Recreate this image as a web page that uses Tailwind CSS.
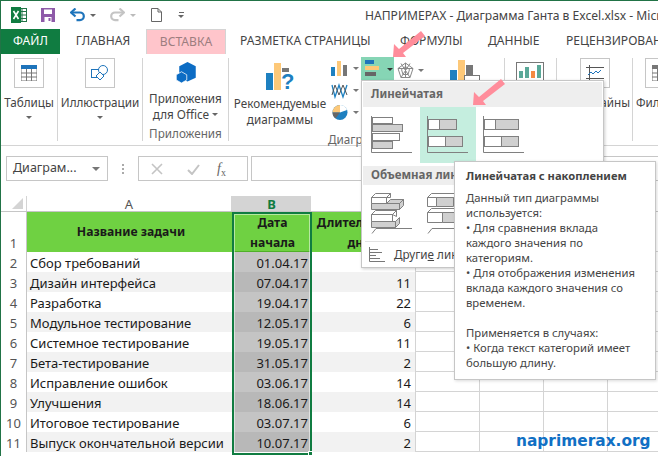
<!DOCTYPE html>
<html><head><meta charset="utf-8"><script src="https://cdn.jsdelivr.net/npm/@tailwindcss/browser@4"></script></head>
<body class="m-0">
<div class="relative w-[658px] h-[456px] overflow-hidden bg-white border-l border-t border-[#217346] font-['Noto_Sans',sans-serif] text-[#444]">

<!-- title bar -->
<div class="flex h-[28px] items-center [&>*]:shrink-0">
  <svg class="ml-[10px] w-[16px] h-[16px]" viewBox="0 0 16 16"><rect x="6.500" y="1.500" width="9" height="13" fill="#fff" stroke="#217346"/><path d="M7 4.500h8M7 8h8M7 11.500h8M11 2v12" stroke="#217346"/><rect x="0" y="0" width="10" height="16" fill="#107c41"/><path d="M2.500 4l5 8M7.500 4l-5 8" stroke="#fff" stroke-width="1.600"/></svg>
  <svg class="ml-[14px] w-[14px] h-[14px]" viewBox="0 0 14 14"><rect width="14" height="14" fill="#8e5aa8"/><rect x="3" y="1.500" width="8" height="4.500" fill="#fff"/><rect x="3.500" y="9" width="7" height="5" fill="#fff"/><rect x="7.500" y="10" width="2" height="3" fill="#8e5aa8"/></svg>
  <svg class="ml-[15px] w-[15px] h-[14px]" viewBox="0 0 15 14"><path d="M1.500 4.500h8.500a3.800 3.800 0 0 1 0 7.600H6.500" fill="none" stroke="#1e74bb" stroke-width="2.200"/><path d="M5.500 0.500L1 4.500l4.500 4" fill="none" stroke="#1e74bb" stroke-width="2.200"/></svg>
  <span class="ml-[5px] w-0 h-0 border-x-[3px] border-x-transparent border-t-[3px] border-t-[#666]"></span>
  <svg class="ml-[14px] w-[15px] h-[14px]" viewBox="0 0 15 14"><path d="M13.500 4.500H5a3.800 3.800 0 0 0 0 7.600h3.500" fill="none" stroke="#c4c4c4" stroke-width="2.200"/><path d="M9.500 0.500L14 4.500l-4.500 4" fill="none" stroke="#c4c4c4" stroke-width="2.200"/></svg>
  <span class="ml-[5px] w-0 h-0 border-x-[3px] border-x-transparent border-t-[3px] border-t-[#bbb]"></span>
  <svg class="ml-[15px] w-[11px] h-[14px]" viewBox="0 0 11 14"><path d="M.5.500h6.500l3.500 3.500v9.500H.5zM7 .5V4h3.500" fill="#fff" stroke="#666"/></svg>
  <span class="ml-[16px] flex flex-col items-center gap-[2px]"><span class="w-[5px] h-px bg-[#666]"></span><span class="w-0 h-0 border-x-[3px] border-x-transparent border-t-[3px] border-t-[#666]"></span></span>
  <span class="ml-[181px] mt-[2px] text-[12.1px] whitespace-nowrap text-[#444]">НАПРИМЕРАХ - Диаграмма Ганта в Excel.xlsx - Microsoft Excel</span>
</div>

<!-- tabs -->
<div class="flex h-[25px] items-stretch text-[12.1px] whitespace-nowrap [&>*]:shrink-0">
  <div class="w-[59px] bg-[#107c41] text-white flex items-center justify-center">ФАЙЛ</div>
  <div class="w-[86px] flex items-center justify-center">ГЛАВНАЯ</div>
  <div class="w-[80px] bg-[#ffc5cb] border-x border-t border-[#d4d4d4] text-[#9c7d7f] flex items-center justify-center">ВСТАВКА</div>
  <div class="ml-[14px] w-[130px] flex items-center">РАЗМЕТКА СТРАНИЦЫ</div>
  <div class="ml-[30px] w-[59px] flex items-center">ФОРМУЛЫ</div>
  <div class="ml-[29px] w-[49px] flex items-center">ДАННЫЕ</div>
  <div class="ml-[29px] flex items-center">РЕЦЕНЗИРОВАНИЕ</div>
</div>

<!-- ribbon -->
<div class="flex h-[92px] border-b border-[#d4d4d4] pt-[4px] text-[11.7px] text-[#444] whitespace-nowrap [&>*]:shrink-0">
  <div class="w-[57px] h-[83px] border-r border-[#d4d4d4] flex flex-col items-center">
    <div class="w-[30px] h-[30px] border border-[#c6c6c6] flex items-center justify-center">
      <svg class="w-[16px] h-[16px]" viewBox="0 0 16 16"><rect width="16" height="16" fill="#fff" stroke="#777"/><rect width="16" height="4" fill="#1e74bb"/><path d="M0 8h16M0 12h16M5.500 4v12M10.500 4v12" stroke="#777"/></svg>
    </div>
    <span class="mt-[4px] leading-[20px]">Таблицы</span>
    <span class="mt-[4px] w-0 h-0 border-x-[3px] border-x-transparent border-t-[3px] border-t-[#666]"></span>
  </div>
  <div class="w-[85px] h-[83px] border-r border-[#d4d4d4] flex flex-col items-center">
    <div class="w-[30px] h-[30px] border border-[#c6c6c6] flex items-center justify-center">
      <svg class="w-[18px] h-[16px]" viewBox="0 0 18 16"><rect x="0.500" y="4.500" width="10" height="8" fill="#fff" stroke="#1e74bb"/><circle cx="12" cy="5" r="4.500" fill="#fff" stroke="#1e74bb"/><path d="M9 7l4 4-4 4-4-4z" fill="#fff" stroke="#1e74bb"/></svg>
    </div>
    <span class="mt-[4px] leading-[20px]">Иллюстрации</span>
    <span class="mt-[4px] w-0 h-0 border-x-[3px] border-x-transparent border-t-[3px] border-t-[#666]"></span>
  </div>
  <div class="w-[86px] h-[83px] border-r border-[#d4d4d4] flex flex-col items-center">
    <svg class="mt-[4px] w-[28px] h-[28px]" viewBox="0 0 28 28"><path d="M16 0L27 5.500V21L16 26L5 21V5.500z" fill="#0c6cc4"/><path d="M8 13l7 4v7l-7 4-7-4v-7z" fill="#0c6cc4" stroke="#fff" stroke-width="1"/></svg>
    <span class="mt-[7px] leading-[16px]">Приложения</span>
    <span class="leading-[16px] flex items-center gap-[3px]">для Office<span class="w-0 h-0 border-x-[3px] border-x-transparent border-t-[3px] border-t-[#666]"></span></span>
    <span class="mt-[3px] leading-[16px] text-[#666]">Приложения</span>
  </div>
  <div class="w-[102px] flex flex-col items-center">
    <svg class="mt-[4px] w-[30px] h-[30px]" viewBox="0 0 30 30"><rect x="1" y="11" width="7" height="17" fill="#1e80c0"/><rect x="9" y="1" width="7" height="27" fill="#fdc878"/><rect x="17" y="6" width="7" height="4" fill="#777"/><text x="16" y="27" font-size="22" font-weight="700" fill="#1e80c0" font-family="Liberation Sans">?</text></svg>
    <span class="mt-[3px] leading-[16px]">Рекомендуемые</span>
    <span class="leading-[16px]">диаграммы</span>
  </div>
  <div class="w-[30px] h-[83px] relative flex flex-col gap-[5px] pt-[2px]">
    <div class="flex items-center gap-[4px]"><svg class="w-[18px] h-[17px]" viewBox="0 0 18 17"><rect x="0" y="7" width="4" height="9" fill="#1e80c0"/><rect x="6" y="1" width="4" height="15" fill="#fdc878"/><rect x="12" y="5" width="4" height="11" fill="#777"/></svg><span class="w-0 h-0 border-x-[3px] border-x-transparent border-t-[3px] border-t-[#777]"></span></div>
    <div class="flex items-center gap-[4px]"><svg class="w-[18px] h-[17px]" viewBox="0 0 18 17"><path d="M1 3l3 12 4-12 4 12 4-12" fill="none" stroke="#1e80c0" stroke-width="1.300"/><path d="M1 13l3-10 4 10 4-10 4 10" fill="none" stroke="#555" stroke-width="1"/></svg><span class="w-0 h-0 border-x-[3px] border-x-transparent border-t-[3px] border-t-[#777]"></span></div>
    <div class="flex items-center gap-[4px]"><svg class="w-[18px] h-[17px]" viewBox="0 0 18 17"><circle cx="9" cy="8.500" r="7.500" fill="#1e80c0"/><path d="M9 8.500V1a7.500 7.500 0 0 1 7 5z" fill="#fff"/><path d="M9 8.500H1.500a7.500 7.500 0 0 1 7.500-7.500z" fill="#fdc878"/><path d="M9 8.500H1.500a7.500 7.500 0 0 0 3 6z" fill="#666"/></svg><span class="w-0 h-0 border-x-[3px] border-x-transparent border-t-[3px] border-t-[#777]"></span></div>
    <span class="absolute left-[-3px] top-[73px] leading-[16px] text-[#666]">Диаграммы</span>
  </div>
  <div class="w-[33px] h-[24px] -mt-[1px] bg-[#86d5b5] flex items-center gap-[3px] pl-[3px]">
    <svg class="w-[20px] h-[18px]" viewBox="0 0 20 18"><rect x="1" y="0" width="9" height="4" fill="#1e74bb"/><rect x="1" y="6" width="14" height="4" fill="#fdc878"/><rect x="1" y="12" width="11" height="4" fill="#666"/></svg>
    <span class="w-0 h-0 border-x-[3px] border-x-transparent border-t-[3px] border-t-[#333]"></span>
  </div>
  <div class="w-[30px] h-[24px] flex items-center gap-[4px] pl-[3px]">
    <svg class="w-[17px] h-[17px]" viewBox="0 0 17 17"><path d="M8.500 1l7.500 5.500-3 9H4l-3-9z M8.500 4.500l4 3-1.500 5H6l-1.500-5z M8.500 1v14M1 6.500l15 0M4 15.500l9-14M13 15.500l-9-14" fill="none" stroke="#888" stroke-width="1"/></svg>
    <span class="w-0 h-0 border-x-[3px] border-x-transparent border-t-[3px] border-t-[#777]"></span>
  </div>
  <div class="w-[81px] h-[83px] border-r border-[#d4d4d4] pl-[26px] pt-[2px]">
    <svg class="w-[31px] h-[28px]" viewBox="0 0 31 28"><rect x="0" y="10" width="7" height="18" fill="#1e80c0"/><rect x="8" y="0" width="7" height="28" fill="#fdc878"/><rect x="16" y="5" width="7" height="10" fill="#777"/><rect x="14.500" y="15.500" width="15" height="12" fill="#fff" stroke="#777"/></svg>
  </div>
  <div class="w-[52px] h-[83px] border-r border-[#d4d4d4] pl-[11px] pt-[4px]">
    <svg class="w-[28px] h-[28px]" viewBox="0 0 28 28"><rect x=".5" y=".5" width="27" height="27" fill="#fff" stroke="#777"/><rect x="3" y="9" width="4" height="7" fill="#5aa898"/><rect x="9" y="5" width="4" height="11" fill="#5aa898"/><rect x="15" y="9" width="4" height="7" fill="#f58a42"/><rect x="21" y="3" width="4" height="13" fill="#5aa898"/></svg>
  </div>
  <div class="w-[76px] h-[83px] border-r border-[#d4d4d4] flex flex-col items-center">
    <div class="w-[30px] h-[30px] border border-[#c6c6c6] flex items-center justify-center">
      <svg class="w-[18px] h-[16px]" viewBox="0 0 18 16"><path d="M0 2.500h18M0 13.500h18M3.500 0v16" stroke="#555"/><path d="M2 10l3-3 2 2 3-3 2 2 3-3" fill="none" stroke="#1e74bb"/></svg>
    </div>
    <span class="mt-[4px] leading-[20px]">Спарклайны</span>
  </div>
  <div class="flex flex-col items-start">
    <div class="ml-[12px] w-[30px] h-[30px] border border-[#c6c6c6] flex items-center pl-[6px]">
      <svg class="w-[16px] h-[16px]" viewBox="0 0 16 16"><rect width="16" height="16" fill="#fff" stroke="#777"/><rect width="16" height="4" fill="#777"/><path d="M0 8h16M0 12h16M5.500 4v12" stroke="#777"/></svg>
    </div>
    <span class="ml-[3px] mt-[4px] leading-[20px]">Фильтры</span>
  </div>
</div>

<!-- formula bar -->
<div class="flex h-[25px] mt-[10px] items-stretch text-[12.5px]">
  <div class="ml-[5px] w-[102px] border border-[#c6c6c6] flex items-center justify-between pl-[6px] pr-[7px]"><span>Диаграм...</span><span class="w-0 h-0 border-x-[4px] border-x-transparent border-t-[4px] border-t-[#777]"></span></div>
  <div class="w-[30px] flex flex-col items-center justify-center gap-[2px]"><span class="w-[2px] h-[2px] bg-[#aaa]"></span><span class="w-[2px] h-[2px] bg-[#aaa]"></span><span class="w-[2px] h-[2px] bg-[#aaa]"></span></div>
  <div class="w-[110px] border border-[#c6c6c6] flex items-center">
    <svg class="ml-[12px] w-[12px] h-[12px]" viewBox="0 0 12 12"><path d="M1 1l10 10M11 1L1 11" stroke="#c4c4c4" stroke-width="1.600"/></svg>
    <svg class="ml-[24px] w-[13px] h-[12px]" viewBox="0 0 13 12"><path d="M1 7l4 4 7-9" fill="none" stroke="#c4c4c4" stroke-width="2"/></svg>
    <span class="ml-[17px] font-['Liberation_Serif',serif] italic text-[14px] text-[#666]">f<sub class="text-[10px] not-italic">x</sub></span>
  </div>
  <div class="ml-[3px] flex-1 border border-[#c6c6c6] border-r-0"></div>
</div>

<!-- sheet -->
<div class="mt-[15px] text-[14px] text-[#1a1a1a]">
  <div class="flex h-[16px] text-[13px] text-[#555] leading-[16px] border-b border-[#c6c6c6]">
    <div class="w-[26px] relative border-r border-[#d4d4d4]"><span class="absolute right-[3px] bottom-[2px] w-0 h-0 border-l-[11px] border-l-transparent border-b-[11px] border-b-[#d4d4d4]"></span></div>
    <div class="w-[205px] text-center border-r border-[#d4d4d4]">A</div>
    <div class="w-[79px] text-center bg-[#d4d4d4] text-[#107c41] font-bold">B</div>
    <div class="flex-1"></div>
  </div>
  <div class="flex h-[40px] font-bold text-[12.2px]">
    <div class="w-[26px] border-r border-[#c6c6c6] font-normal text-[13px] text-[#555] flex items-end justify-center leading-[17px]">1</div>
    <div class="w-[205px] bg-[#6fd142] flex items-center justify-center pl-[3px]">Название задачи</div>
    <div class="w-[79px] bg-[#6fd142] border-b border-[#4fb028] text-center leading-[20px] pt-px pl-[2px]">Дата<br>начала</div>
    <div class="w-[104px] bg-[#6fd142] text-center leading-[20px] pt-px">Длительность,<br>дней</div>
    <div class="flex-1 border-b border-[#d4d4d4] bg-[repeating-linear-gradient(90deg,#d4d4d4_0,#d4d4d4_1px,transparent_1px,transparent_64px)]"></div>
  </div>
  <div class="flex h-[20px] leading-[22px] text-[13px]"><div class="w-[26px] border-r border-[#c6c6c6] text-[#555] text-center">2</div><div class="w-[205px] pl-[3px] bg-white">Сбор требований</div><div class="w-[79px] bg-[#c4c4c4] text-right pr-[3px]">01.04.17</div><div class="w-[104px] bg-white text-right pr-[4px]"></div><div class="flex-1 border-b border-[#d4d4d4] bg-[repeating-linear-gradient(90deg,#d4d4d4_0,#d4d4d4_1px,transparent_1px,transparent_64px)]"></div></div>
  <div class="flex h-[20px] leading-[22px] text-[13px]"><div class="w-[26px] border-r border-[#c6c6c6] text-[#555] text-center">3</div><div class="w-[205px] pl-[3px] bg-[#f2f2f2]">Дизайн интерфейса</div><div class="w-[79px] bg-[#b8b8b8] text-right pr-[3px]">07.04.17</div><div class="w-[104px] bg-[#f2f2f2] text-right pr-[4px]">11</div><div class="flex-1 border-b border-[#d4d4d4] bg-[repeating-linear-gradient(90deg,#d4d4d4_0,#d4d4d4_1px,transparent_1px,transparent_64px)]"></div></div>
  <div class="flex h-[20px] leading-[22px] text-[13px]"><div class="w-[26px] border-r border-[#c6c6c6] text-[#555] text-center">4</div><div class="w-[205px] pl-[3px] bg-white">Разработка</div><div class="w-[79px] bg-[#c4c4c4] text-right pr-[3px]">19.04.17</div><div class="w-[104px] bg-white text-right pr-[4px]">22</div><div class="flex-1 border-b border-[#d4d4d4] bg-[repeating-linear-gradient(90deg,#d4d4d4_0,#d4d4d4_1px,transparent_1px,transparent_64px)]"></div></div>
  <div class="flex h-[20px] leading-[22px] text-[13px]"><div class="w-[26px] border-r border-[#c6c6c6] text-[#555] text-center">5</div><div class="w-[205px] pl-[3px] bg-[#f2f2f2]">Модульное тестирование</div><div class="w-[79px] bg-[#b8b8b8] text-right pr-[3px]">12.05.17</div><div class="w-[104px] bg-[#f2f2f2] text-right pr-[4px]">6</div><div class="flex-1 border-b border-[#d4d4d4] bg-[repeating-linear-gradient(90deg,#d4d4d4_0,#d4d4d4_1px,transparent_1px,transparent_64px)]"></div></div>
  <div class="flex h-[20px] leading-[22px] text-[13px]"><div class="w-[26px] border-r border-[#c6c6c6] text-[#555] text-center">6</div><div class="w-[205px] pl-[3px] bg-white">Системное тестирование</div><div class="w-[79px] bg-[#c4c4c4] text-right pr-[3px]">19.05.17</div><div class="w-[104px] bg-white text-right pr-[4px]">11</div><div class="flex-1 border-b border-[#d4d4d4] bg-[repeating-linear-gradient(90deg,#d4d4d4_0,#d4d4d4_1px,transparent_1px,transparent_64px)]"></div></div>
  <div class="flex h-[20px] leading-[22px] text-[13px]"><div class="w-[26px] border-r border-[#c6c6c6] text-[#555] text-center">7</div><div class="w-[205px] pl-[3px] bg-[#f2f2f2]">Бета-тестирование</div><div class="w-[79px] bg-[#b8b8b8] text-right pr-[3px]">31.05.17</div><div class="w-[104px] bg-[#f2f2f2] text-right pr-[4px]">2</div><div class="flex-1 border-b border-[#d4d4d4] bg-[repeating-linear-gradient(90deg,#d4d4d4_0,#d4d4d4_1px,transparent_1px,transparent_64px)]"></div></div>
  <div class="flex h-[20px] leading-[22px] text-[13px]"><div class="w-[26px] border-r border-[#c6c6c6] text-[#555] text-center">8</div><div class="w-[205px] pl-[3px] bg-white">Исправление ошибок</div><div class="w-[79px] bg-[#c4c4c4] text-right pr-[3px]">03.06.17</div><div class="w-[104px] bg-white text-right pr-[4px]">14</div><div class="flex-1 border-b border-[#d4d4d4] bg-[repeating-linear-gradient(90deg,#d4d4d4_0,#d4d4d4_1px,transparent_1px,transparent_64px)]"></div></div>
  <div class="flex h-[20px] leading-[22px] text-[13px]"><div class="w-[26px] border-r border-[#c6c6c6] text-[#555] text-center">9</div><div class="w-[205px] pl-[3px] bg-[#f2f2f2]">Улучшения</div><div class="w-[79px] bg-[#b8b8b8] text-right pr-[3px]">18.06.17</div><div class="w-[104px] bg-[#f2f2f2] text-right pr-[4px]">14</div><div class="flex-1 border-b border-[#d4d4d4] bg-[repeating-linear-gradient(90deg,#d4d4d4_0,#d4d4d4_1px,transparent_1px,transparent_64px)]"></div></div>
  <div class="flex h-[20px] leading-[22px] text-[13px]"><div class="w-[26px] border-r border-[#c6c6c6] text-[#555] text-center">10</div><div class="w-[205px] pl-[3px] bg-white">Итоговое тестирование</div><div class="w-[79px] bg-[#c4c4c4] text-right pr-[3px]">03.07.17</div><div class="w-[104px] bg-white text-right pr-[4px]">6</div><div class="flex-1 border-b border-[#d4d4d4] bg-[repeating-linear-gradient(90deg,#d4d4d4_0,#d4d4d4_1px,transparent_1px,transparent_64px)]"></div></div>
  <div class="flex h-[20px] leading-[22px] text-[13px]"><div class="w-[26px] border-r border-[#c6c6c6] text-[#555] text-center">11</div><div class="w-[205px] pl-[3px] bg-[#f2f2f2]">Выпуск окончательной версии</div><div class="w-[79px] bg-[#b8b8b8] text-right pr-[3px]">10.07.17</div><div class="w-[104px] bg-[#f2f2f2] text-right pr-[4px]">2</div><div class="flex-1 border-b border-[#d4d4d4] bg-[repeating-linear-gradient(90deg,#d4d4d4_0,#d4d4d4_1px,transparent_1px,transparent_64px)]"></div></div>
</div>

<!-- selection -->
<div class="absolute left-[231px] top-[211px] w-[80px] h-[243px] border-2 border-[#107c41] shadow-[inset_0_0_0_1px_rgba(255,255,255,.5)]"><span class="absolute -right-[3px] -bottom-[3px] w-[5px] h-[5px] bg-[#107c41] border border-white"></span></div>

<!-- gallery dropdown -->
<div class="absolute left-[360px] top-[79px] w-[243px] h-[188px] bg-white border border-[#c6c6c6] shadow-[1px_1px_3px_rgba(0,0,0,.2)] text-[#444]">
  <div class="h-[25px] mt-px mx-px bg-[#eeeeee] pl-[8px] font-bold text-[11.5px] leading-[24px] text-[#666]">Линейчатая</div>
  <div class="flex h-[56px] mx-px">
    <div class="w-[57px] flex items-center justify-center"><svg class="w-[42px] h-[38px]" viewBox="0 0 42 38"><g fill="#fff" stroke="#808080"><rect x="1.500" y="1.500" width="20" height="6"/><rect x="1.500" y="8.500" width="30" height="7" fill="#d0d0d0"/><rect x="1.500" y="17.500" width="27" height="7"/><rect x="1.500" y="25.500" width="20" height="7" fill="#d0d0d0"/></g><path d="M.5 0v36.500H41" fill="none" stroke="#808080"/></svg></div>
    <div class="w-[56px] bg-[#c5eedf] flex items-center justify-center"><svg class="w-[42px] h-[38px]" viewBox="0 0 42 38"><g fill="#fff" stroke="#808080"><rect x="1.500" y="3.500" width="11" height="10"/><rect x="12.500" y="3.500" width="17" height="10" fill="#d0d0d0"/><rect x="1.500" y="20.500" width="17" height="10"/><rect x="18.500" y="20.500" width="17" height="10" fill="#d0d0d0"/></g><path d="M.5 0v36.500H41" fill="none" stroke="#808080"/></svg></div>
    <div class="w-[56px] flex items-center justify-center"><svg class="w-[42px] h-[38px]" viewBox="0 0 42 38"><g fill="#fff" stroke="#808080"><rect x="1.500" y="3.500" width="11" height="10"/><rect x="12.500" y="3.500" width="23" height="10" fill="#d0d0d0"/><rect x="1.500" y="20.500" width="17" height="10"/><rect x="18.500" y="20.500" width="17" height="10" fill="#d0d0d0"/></g><path d="M.5 0v36.500H41" fill="none" stroke="#808080"/></svg></div>
  </div>
  <div class="mt-[3px] mx-px h-[19px] bg-[#eeeeee] pl-[8px] font-bold text-[11.5px] leading-[18px] text-[#666] whitespace-nowrap">Объемная линейчатая</div>
  <div class="flex h-[56px] mx-px">
    <div class="w-[57px] flex items-center justify-center"><svg class="w-[42px] h-[42px]" viewBox="0 0 42 42"><g stroke="#808080" stroke-linejoin="round"><path d="M.5 5.500l4-4h15l-4 4zM.5 5.500h15v6H.5zM15.500 5.500l4-4v4z" fill="#fff"/><path d="M.5 11.500h28v6H.5zM15.500 11.500l4-4h13l-4 4zM28.500 11.500l4-4v6l-4 4z" fill="#d0d0d0"/><path d="M.5 22.500l4-4h21l-4 4zM.5 22.500h21v7H.5zM21.500 22.500l4-4v6z" fill="#fff"/><path d="M.5 29.500h24v6H.5zM24.500 29.500l4-4v6l-4 4z" fill="#d0d0d0"/></g><path d="M1 41.500l4-5h36" fill="none" stroke="#808080"/></svg></div>
    <div class="w-[56px] flex items-center justify-center"><svg class="w-[42px] h-[42px]" viewBox="0 0 42 42"><g stroke="#808080" stroke-linejoin="round"><path d="M.5 5.500l4-4h26l-4 4z" fill="#fff"/><rect x=".5" y="5.500" width="9" height="9" fill="#fff"/><rect x="9.500" y="5.500" width="17" height="9" fill="#d0d0d0"/><path d="M.5 20.500l4-4h32l-4 4z" fill="#fff"/><rect x=".5" y="20.500" width="15" height="10" fill="#fff"/><rect x="15.500" y="20.500" width="17" height="10" fill="#d0d0d0"/></g><path d="M1 41.500l4-5h36" fill="none" stroke="#808080"/></svg></div>
  </div>
  <div class="mx-[3px] border-t border-[#e2e2e2] h-[26px] flex items-center pl-[4px] text-[11.7px] whitespace-nowrap">
    <svg class="w-[16px] h-[15px]" viewBox="0 0 16 15"><path d="M.5 0v14.500H16" fill="none" stroke="#777"/><path d="M1 2.500h8M1 5.500h12M1 8.500h6M1 11.500h10" stroke="#777"/></svg>
    <span class="ml-[9px]">Други<u>е</u> линейчатые</span>
  </div>
</div>

<!-- tooltip -->
<div class="absolute left-[453px] top-[160px] w-[202px] h-[219px] bg-white border border-[#c6c6c6] shadow-[1px_1px_3px_rgba(0,0,0,.15)] pl-[11px] pt-[5px] text-[11.3px] leading-[15px] text-[#444]">
  <div class="font-bold text-[11.2px] leading-[17px] whitespace-nowrap">Линейчатая с накоплением</div>
  <div class="mt-[6px] whitespace-nowrap">Данный тип диаграммы<br>используется:<br>• Для сравнения вклада<br>каждого значения по<br>категориям.<br>• Для отображения изменения<br>вклада каждого значения со<br>временем.<br><br>Применяется в случаях:<br>• Когда текст категорий имеет<br>большую длину.</div>
</div>

<!-- watermark -->
<div class="absolute left-[515px] top-[430px] font-['DejaVu_Sans',sans-serif] font-bold text-[15.4px] leading-[20px] text-[#1170c4] whitespace-nowrap">naprimerax.org</div>

<!-- arrows -->
<svg class="absolute -left-px -top-px w-[658px] h-[456px] pointer-events-none" viewBox="0 0 658 456"><g fill="#ff8d9b"><path d="M393 57L394 44L399 49L421 31L425 36L403 53L406 57z"/><path d="M473 105L474 92L479 97L501 79L505 84L483 101L486 105z"/></g></svg>
</div>
</body></html>
